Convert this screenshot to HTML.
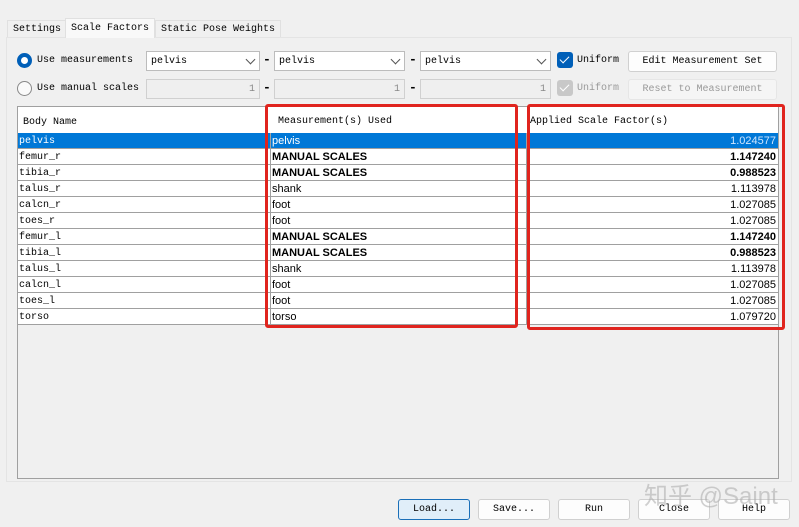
<!DOCTYPE html>
<html><head><meta charset="utf-8"><style>
*{box-sizing:border-box;margin:0;padding:0}
body{width:799px;height:527px;background:#f0f0f0;position:relative;overflow:hidden;font-family:"Liberation Mono",monospace;font-size:10px;color:#000}
.a{position:absolute}
.tab{position:absolute;top:18px;height:19px;padding:4px 5px;font-size:10px;border:1px solid #e0e0e0;border-bottom:none;background:#f0f0f0}
.panel{position:absolute;left:6px;top:37px;width:786px;height:445px;border:1px solid #e4e4e4;background:#f0f0f0}
.combo{position:absolute;height:20px;border:1px solid #bcbcbc;background:#fff;padding:4px 4px;font-size:10px}
.combo.dis{background:#efefef;border-color:#d0d0d0;color:#888;text-align:right}
.chev{position:absolute;right:5px;top:4px;width:7px;height:7px;border-right:1px solid #555;border-bottom:1px solid #555;transform:rotate(45deg)}
.dash{position:absolute;font-weight:bold;font-size:13px}
.btn{position:absolute;height:21px;border:1px solid #d0d0d0;border-radius:3px;background:#fdfdfd;text-align:center;font-size:10px;padding-top:4px}
.tbl{position:absolute;left:17px;top:106px;width:762px;height:373px;border:1px solid #a0a0a0;background:#f0f0f0}
.row{position:absolute;left:0;width:760px;height:16px;background:#fff;border-bottom:1px solid #a0a0a0}
.row div{position:absolute;top:0;height:15px;line-height:16px}
.row div.c1{line-height:18px}
.c1{left:1px;width:250px}
.c2{left:252px;width:256px;font-family:"Liberation Sans",sans-serif;font-size:11px;border-left:1px solid #a0a0a0;padding-left:1px}
.c3{left:508px;width:252px;font-family:"Liberation Sans",sans-serif;font-size:11px;text-align:right;padding-right:2px;border-left:1px solid #a0a0a0}
.b{font-weight:bold}
.sel{background:#0078d7;color:#fff}
.sel .c3{color:#cfe6ff}
.red{position:absolute;border:3px solid #e0241e;border-radius:3px}
</style></head><body>
<div class="panel"></div>
<div class="tab" style="left:7px;top:20px;height:17px;padding-top:3px">Settings</div>
<div class="tab" style="left:65px;background:#f9f9f9;height:20px">Scale Factors</div>
<div class="tab" style="left:155px;top:20px;height:17px;padding-top:3px">Static Pose Weights</div>

<div class="a" style="left:17px;top:53px;width:15px;height:15px;border-radius:50%;background:#005fb8"><div class="a" style="left:4px;top:4px;width:7px;height:7px;border-radius:50%;background:#fff"></div></div>
<div class="a" style="left:37px;top:55px">Use measurements</div>
<div class="a" style="left:17px;top:81px;width:15px;height:15px;border-radius:50%;border:1px solid #888;background:#fafafa"></div>
<div class="a" style="left:37px;top:83px">Use manual scales</div>

<div class="combo" style="left:146px;top:51px;width:114px">pelvis<span class="chev"></span></div>
<div class="dash" style="left:263px;top:52px">-</div>
<div class="combo" style="left:274px;top:51px;width:131px">pelvis<span class="chev"></span></div>
<div class="dash" style="left:409px;top:52px">-</div>
<div class="combo" style="left:420px;top:51px;width:131px">pelvis<span class="chev"></span></div>
<div class="combo dis" style="left:146px;top:79px;width:114px">1</div>
<div class="dash" style="left:263px;top:80px">-</div>
<div class="combo dis" style="left:274px;top:79px;width:131px">1</div>
<div class="dash" style="left:409px;top:80px">-</div>
<div class="combo dis" style="left:420px;top:79px;width:131px">1</div>

<div class="a" style="left:557px;top:52px;width:16px;height:16px;border-radius:3px;background:#005fb8"><div class="a" style="left:5px;top:2px;width:5px;height:9px;border-right:1.5px solid #fff;border-bottom:1.5px solid #fff;transform:rotate(45deg)"></div></div>
<div class="a" style="left:577px;top:55px">Uniform</div>
<div class="a" style="left:557px;top:80px;width:16px;height:16px;border-radius:3px;background:#c8c8c8"><div class="a" style="left:5px;top:2px;width:5px;height:9px;border-right:1.5px solid #fff;border-bottom:1.5px solid #fff;transform:rotate(45deg)"></div></div>
<div class="a" style="left:577px;top:83px;color:#999">Uniform</div>
<div class="btn" style="left:628px;top:51px;width:149px">Edit Measurement Set</div>
<div class="btn" style="left:628px;top:79px;width:149px;background:#f5f5f5;color:#999;border-color:#e6e6e6">Reset to Measurement</div>

<div class="tbl">
<div class="row" style="top:0;height:27px;border-bottom:none"><div class="c1" style="top:7px;padding-left:4px">Body Name</div><div class="c2" style="top:7px;border:none;font-family:'Liberation Mono',monospace;font-size:10px;padding-left:8px">Measurement(s) Used</div><div class="c3" style="top:7px;border:none;text-align:left;font-family:'Liberation Mono',monospace;font-size:10px;padding-left:4px">Applied Scale Factor(s)</div></div>
<div class="row sel" style="top:26px"><div class="c1">pelvis</div><div class="c2">pelvis</div><div class="c3">1.024577</div></div>
<div class="row" style="top:42px"><div class="c1">femur_r</div><div class="c2 b">MANUAL SCALES</div><div class="c3 b">1.147240</div></div>
<div class="row" style="top:58px"><div class="c1">tibia_r</div><div class="c2 b">MANUAL SCALES</div><div class="c3 b">0.988523</div></div>
<div class="row" style="top:74px"><div class="c1">talus_r</div><div class="c2">shank</div><div class="c3">1.113978</div></div>
<div class="row" style="top:90px"><div class="c1">calcn_r</div><div class="c2">foot</div><div class="c3">1.027085</div></div>
<div class="row" style="top:106px"><div class="c1">toes_r</div><div class="c2">foot</div><div class="c3">1.027085</div></div>
<div class="row" style="top:122px"><div class="c1">femur_l</div><div class="c2 b">MANUAL SCALES</div><div class="c3 b">1.147240</div></div>
<div class="row" style="top:138px"><div class="c1">tibia_l</div><div class="c2 b">MANUAL SCALES</div><div class="c3 b">0.988523</div></div>
<div class="row" style="top:154px"><div class="c1">talus_l</div><div class="c2">shank</div><div class="c3">1.113978</div></div>
<div class="row" style="top:170px"><div class="c1">calcn_l</div><div class="c2">foot</div><div class="c3">1.027085</div></div>
<div class="row" style="top:186px"><div class="c1">toes_l</div><div class="c2">foot</div><div class="c3">1.027085</div></div>
<div class="row" style="top:202px"><div class="c1">torso</div><div class="c2">torso</div><div class="c3">1.079720</div></div>
</div>

<div class="red" style="left:265px;top:104px;width:253px;height:224px"></div>
<div class="red" style="left:527px;top:104px;width:258px;height:226px"></div>

<div class="btn" style="left:398px;top:499px;width:72px;background:#e0eef9;border-color:#1a6fb8">Load...</div>
<div class="btn" style="left:478px;top:499px;width:72px">Save...</div>
<div class="btn" style="left:558px;top:499px;width:72px">Run</div>
<div class="btn" style="left:638px;top:499px;width:72px">Close</div>
<div class="btn" style="left:718px;top:499px;width:72px">Help</div>
<div class="a" style="left:644px;top:476px;font-family:'Liberation Sans','Noto Sans CJK SC',sans-serif;font-size:24px;color:rgba(170,170,170,0.55)">知乎 @Saint</div>
</body></html>
